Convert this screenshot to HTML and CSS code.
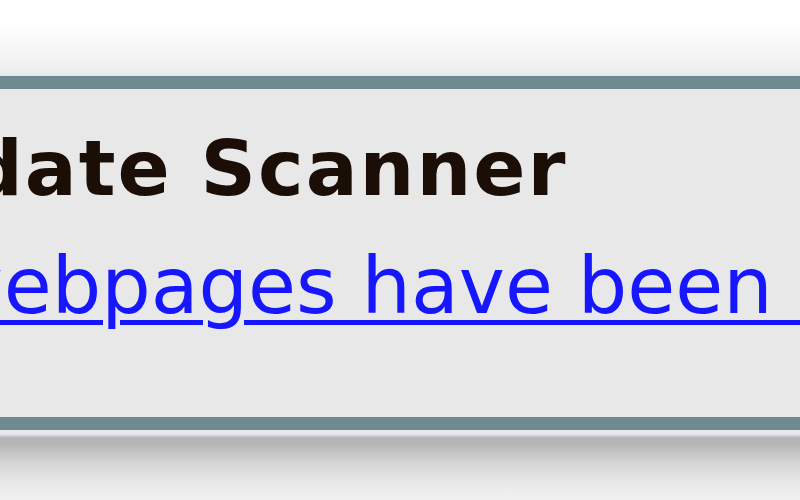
FILE: index.html
```html
<!DOCTYPE html>
<html>
<head>
<meta charset="utf-8">
<link rel="stylesheet" href="styles.css">
</head>
<body>
<div class="top"></div>
<div class="panel">
  <div class="content">
    <div class="title">Update Scanner</div>
    <a class="link" href="#">Some webpages have been updated</a>
  </div>
</div>
<div class="bottom"></div>
</body>
</html>
```
FILE: styles.css
```css
html, body {
  margin: 0;
  padding: 0;
  width: 800px;
  height: 500px;
  overflow: hidden;
  background: #f2f2f2;
  font-family: "DejaVu Sans", Verdana, sans-serif;
}
.top {
  height: 76px;
  background: linear-gradient(to bottom, #ffffff 0px, #ffffff 22px, #f7f7f7 45px, #efefef 70px, #e4e8ea 76px);
}
.panel {
  height: 328px;
  border-top: 13px solid #6f8a90;
  border-bottom: 13px solid #6f8a90;
  background: #e8e8e8;
  overflow: hidden;
  white-space: nowrap;
}
.content {
  padding-top: 35px;
}
.title {
  margin-left: -154px;
  font-weight: bold;
  font-size: 77px;
  letter-spacing: 2px;
  line-height: 90px;
  color: #1a0e06;
}
.link {
  display: inline-block;
  margin-left: -306px;
  margin-top: 27px;
  font-size: 78px;
  line-height: 90px;
  color: #1616ff;
  text-decoration: underline;
  text-decoration-thickness: 5px;
  text-underline-offset: 7px;
}
.bottom {
  height: 70px;
  background: linear-gradient(to bottom, #e6e8ee 0px, #e6e8ee 4px, #b4b4b4 8px, #b6b6b6 14px, #d4d4d4 32px, #e8e8e8 52px, #f2f2f2 70px);
}
```
